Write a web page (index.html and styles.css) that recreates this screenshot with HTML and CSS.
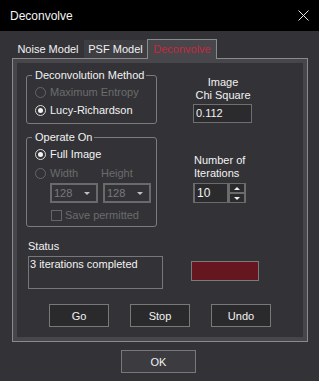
FILE: index.html
```html
<!DOCTYPE html>
<html>
<head>
<title>Deconvolve</title>
<link rel="stylesheet" href="styles.css">
</head>
<body>
<div class="window">
    <div class="titlebar">
        <span class="title">Deconvolve</span>
        <svg class="close" width="11" height="11" viewBox="0 0 11 11">
            <path d="M0.5 0.5 L10.5 10.5 M10.5 0.5 L0.5 10.5" stroke="#e8e8e8" stroke-width="1" fill="none"/>
        </svg>
    </div>

    <!-- Tabs -->
    <div class="tabs">
        <div class="tab tab-noise">Noise Model</div>
        <div class="tab tab-psf">PSF Model</div>
        <div class="tab tab-active">Deconvolve</div>
    </div>

    <div class="panel">
        <!-- Method row -->
        <div class="row">
            <fieldset class="group">
                <legend>Deconvolution Method</legend>
                <div class="option disabled"><span class="radio"></span>Maximum Entropy</div>
                <div class="option"><span class="radio checked"></span>Lucy-Richardson</div>
            </fieldset>
            <div class="chi">
                <div>Image</div>
                <div>Chi Square</div>
                <div class="field">0.112</div>
            </div>
        </div>

        <!-- Operate On row -->
        <div class="row row-operate">
            <fieldset class="group">
                <legend>Operate On</legend>
                <div class="option"><span class="radio checked"></span>Full Image</div>
                <div class="option option-size disabled">
                    <span class="radio"></span><span class="size-label">Width</span>Height
                </div>
                <div class="combos">
                    <div class="combo">128<span class="arrow"></span></div>
                    <div class="combo">128<span class="arrow"></span></div>
                </div>
                <div class="option option-check disabled"><span class="check"></span>Save permitted</div>
            </fieldset>
            <div class="iter">
                <div class="iter-label">Number of</div>
                <div class="iter-label">Iterations</div>
                <div class="spin">
                    <div class="spin-value">10</div>
                    <div class="spin-buttons">
                        <div class="spin-btn"><span class="up"></span></div>
                        <div class="spin-btn"><span class="down"></span></div>
                    </div>
                </div>
            </div>
        </div>

        <!-- Status row -->
        <div class="row status-row">
            <div class="status">
                <div>Status</div>
                <div class="status-box">3 iterations completed</div>
            </div>
            <div class="swatch"></div>
        </div>

        <div class="actions">
            <button class="btn">Go</button>
            <button class="btn">Stop</button>
            <button class="btn">Undo</button>
        </div>
    </div>

    <div class="footer">
        <button class="btn btn-ok">OK</button>
    </div>
</div>
</body>
</html>
```

FILE: styles.css
```css
body {
    margin: 0;
    background-color: #333337;
    font-family: "Liberation Sans", Arial, sans-serif;
    font-size: 11px;
    color: #f2f2f2;
}
.window {
    width: 319px;
    height: 381px;
    background-color: #333337;
}
.titlebar {
    height: 31px;
    background-color: #000;
    display: flex;
    align-items: center;
    justify-content: space-between;
    padding: 0 10px;
}
.title {
    font-size: 12px;
    color: #f4f4f4;
}

/* tabs */
.tabs {
    display: flex;
    height: 18px;
    margin: 9px 0 0 12px;
}
.tab {
    height: 18px;
    line-height: 18px;
    text-align: center;
    box-sizing: border-box;
}
.tab-noise {
    width: 72px;
}
.tab-psf {
    width: 63px;
    background-color: #3d3d42;
}
.tab-active {
    width: 70px;
    height: 20px;
    margin-top: -1px;
    line-height: 19px;
    border: 1px solid #8a8a8a;
    border-bottom: none;
    background-color: #46464b;
    color: #c8283e;
    position: relative;
    z-index: 1;
}

/* tab page */
.panel {
    margin-left: 12px;
    width: 296px;
    height: 284px;
    box-sizing: border-box;
    border: 1px solid #8a8a8a;
    box-shadow: inset 0 0 0 4px #46464b;
    padding: 10px 0 0 13px;
}
.row {
    display: flex;
}
.row-operate {
    margin-top: 7px;
}
.group {
    margin: 0;
    width: 131px;
    min-width: 0;
    box-sizing: border-box;
    border: 1px solid #7c7c7c;
    border-radius: 3px;
    padding: 1px 0 4px 8px;
}
.row-operate .group {
    padding-bottom: 2px;
}
.group legend {
    padding: 0 2px 0 3px;
    margin-left: -3px;
    line-height: 13px;
}
.option {
    display: flex;
    align-items: center;
    height: 18px;
}
.option-size {
    margin-top: 1px;
}
.option-check {
    margin: 3px 0 0 16px;
}
.disabled {
    color: #6b6b6b;
}
.radio {
    width: 11px;
    height: 11px;
    box-sizing: border-box;
    border: 1px solid #dcdcdc;
    border-radius: 50%;
    margin-right: 4px;
    display: flex;
    align-items: center;
    justify-content: center;
}
.disabled .radio {
    border-color: #666;
}
.radio.checked::after {
    content: "";
    width: 5px;
    height: 5px;
    border-radius: 50%;
    background-color: #f2f2f2;
}
.check {
    width: 11px;
    height: 11px;
    box-sizing: border-box;
    border: 1px solid #666;
    margin-right: 3px;
}
.size-label {
    width: 51px;
}
.combos {
    display: flex;
    gap: 5px;
    margin: 1px 0 0 15px;
}
.combo {
    width: 48px;
    height: 20px;
    box-sizing: border-box;
    border: 2px solid #6a6a6a;
    display: flex;
    align-items: center;
    justify-content: space-between;
    padding: 0 6px 0 2px;
    color: #7a7a7a;
}
.arrow {
    border-left: 3px solid transparent;
    border-right: 3px solid transparent;
    border-top: 3px solid #c0c0c0;
}

/* right column */
.chi {
    margin-left: 36px;
    width: 60px;
    padding-top: 7px;
    text-align: center;
    line-height: 13px;
}
.field {
    width: 59px;
    height: 19px;
    margin-top: 2px;
    box-sizing: border-box;
    border: 1px solid #6f6f6f;
    background-color: #2b2b2e;
    text-align: left;
    padding-left: 2px;
    line-height: 17px;
}
.iter {
    margin: 23px 0 0 36px;
    line-height: 13px;
}
.iter-label {
    padding-left: 1px;
}
.spin {
    display: flex;
    gap: 3px;
    width: 53px;
    height: 20px;
    box-sizing: border-box;
    margin-top: 3px;
    padding: 1px 2px;
    background-color: #6b6b6b;
}
.spin-value {
    width: 32px;
    background-color: #2b2b2e;
    padding-left: 2px;
    box-sizing: border-box;
    line-height: 18px;
    font-size: 12px;
}
.spin-buttons {
    width: 14px;
    display: flex;
    flex-direction: column;
    gap: 2px;
}
.spin-btn {
    height: 8px;
    background-color: #2b2b2e;
    display: flex;
    align-items: center;
    justify-content: center;
}
.up {
    border-left: 3px solid transparent;
    border-right: 3px solid transparent;
    border-bottom: 3px solid #f0f0f0;
}
.down {
    border-left: 3px solid transparent;
    border-right: 3px solid transparent;
    border-top: 3px solid #f0f0f0;
}

/* status */
.status-row {
    margin-top: 13px;
}
.status {
    margin-left: 2px;
    line-height: 13px;
}
.status-box {
    width: 135px;
    height: 33px;
    margin-top: 3px;
    box-sizing: border-box;
    border: 1px solid #777;
    padding: 1px 0 0 1px;
}
.swatch {
    width: 68px;
    height: 20px;
    margin: 21px 0 0 28px;
    box-sizing: border-box;
    border: 1px solid #7a7a7a;
    background-color: #65161f;
}

/* buttons */
.actions {
    display: flex;
    gap: 21px;
    margin: 15px 0 0 23px;
}
.btn {
    width: 60px;
    height: 23px;
    padding: 0;
    border: 1px solid #787878;
    background-color: #2a2a2d;
    color: #f2f2f2;
    font-family: "Liberation Sans", Arial, sans-serif;
    font-size: 11px;
}
.footer {
    display: flex;
    justify-content: center;
    margin-top: 8px;
    padding-right: 2px;
}
.btn-ok {
    width: 75px;
    background-color: #3b3b40;
}
```
